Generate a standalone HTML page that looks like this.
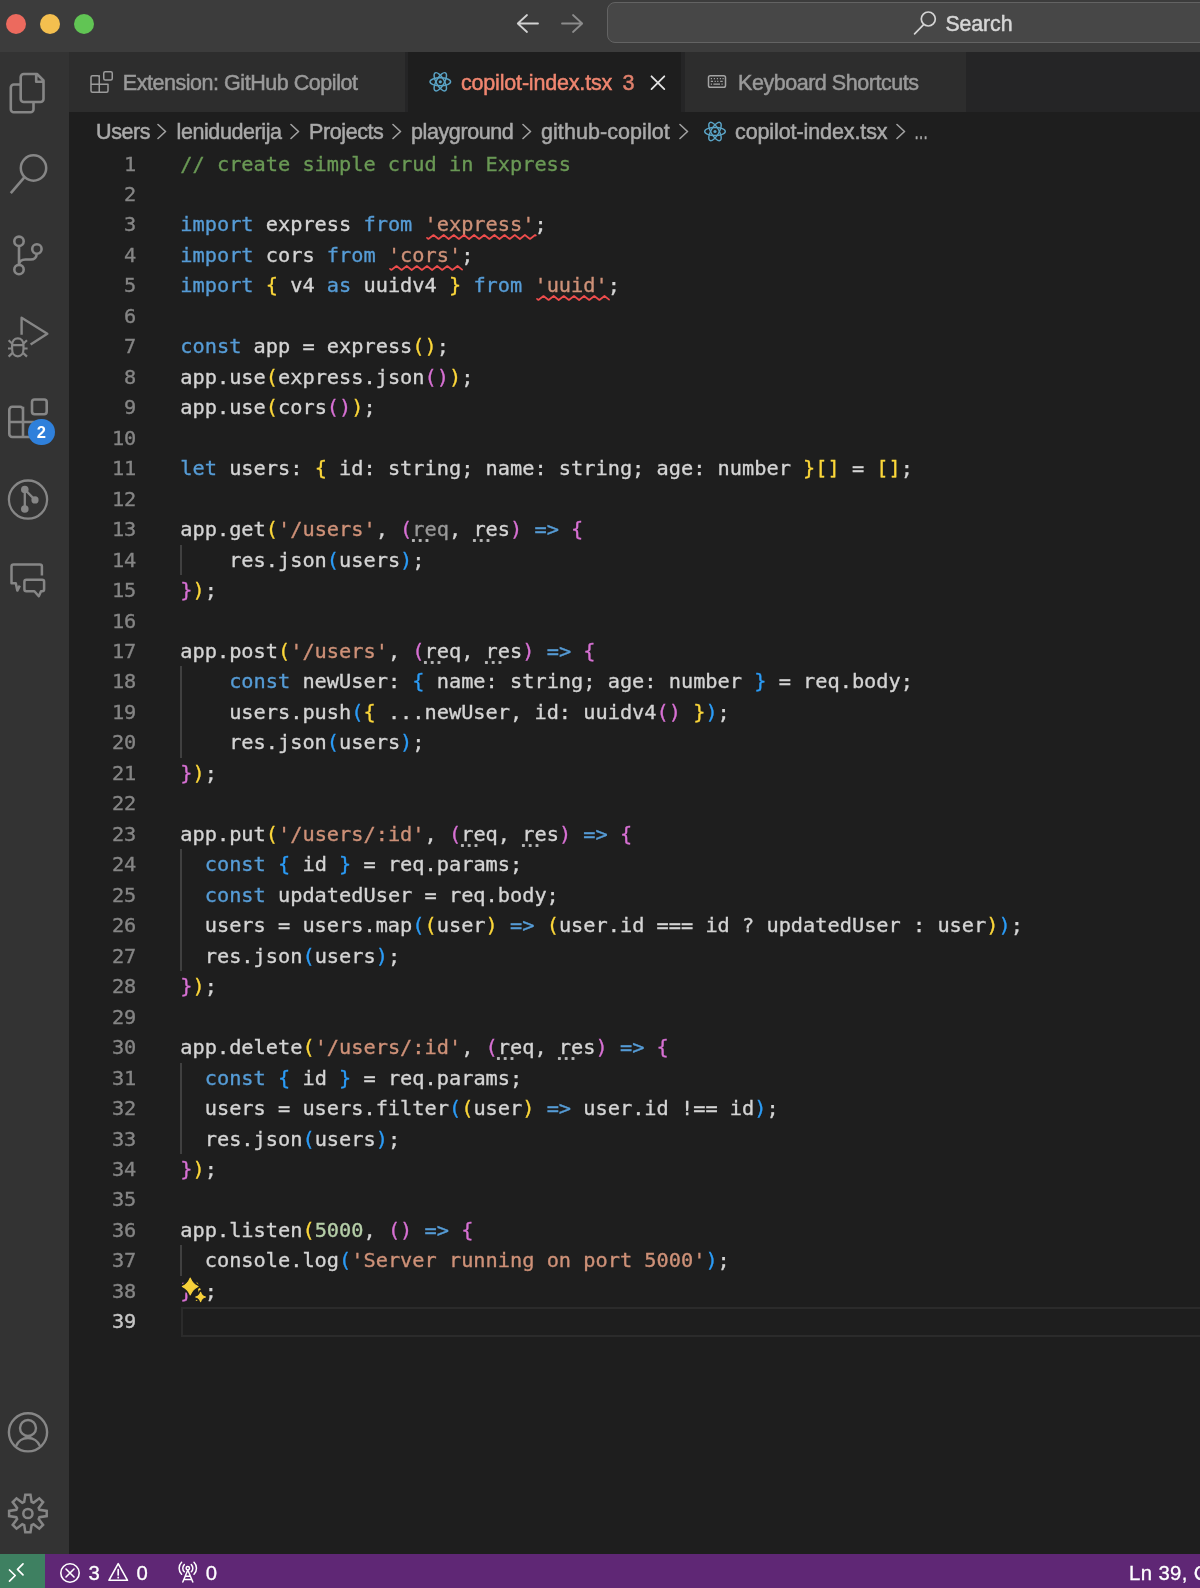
<!DOCTYPE html>
<html lang="en">
<head>
<meta charset="utf-8">
<title>copilot-index.tsx</title>
<style>
*{box-sizing:border-box;margin:0;padding:0}
html,body{width:1200px;height:1588px;overflow:hidden;background:#1e1e1e}
body{position:relative;will-change:transform;font-family:"Liberation Sans",sans-serif;color:#ccc;-webkit-font-smoothing:antialiased}
.abs{position:absolute}
#title{left:0;top:0;width:1200px;height:52.4px;background:#3c3c3c}
.tl{position:absolute;top:14px;width:20px;height:20px;border-radius:50%}
#search{left:607px;top:2.4px;width:620px;height:40.6px;border:1.7px solid #636363;border-radius:8px;background:#474747}
#stext{position:absolute;left:945.5px;top:10.8px;font-size:21.3px;line-height:26px;color:#d6d6d6;-webkit-text-stroke:0.5px #d6d6d6;letter-spacing:-0.1px}
#act{left:0;top:52px;width:69px;height:1502px;background:#333333}
#tabs{left:69px;top:52px;width:1131px;height:60px;background:#252526}
.tab{position:absolute;top:0;height:60px;background:#2d2d2d;font-size:21.5px;color:#9a9a9a;white-space:nowrap;letter-spacing:-0.46px;-webkit-text-stroke:0.5px}
.tab.on{background:#1e1e1e}
.tab .t{position:absolute;top:18.3px;line-height:26px}
#crumbs{left:69px;top:112px;width:1131px;height:37px;background:#1e1e1e;font-size:21.5px;color:#a9a9a9;white-space:nowrap;letter-spacing:-0.4px;-webkit-text-stroke:0.5px}
#crumbs span{position:absolute;top:7px;line-height:26px}
#code{position:absolute;left:68.3px;top:148.5px;-webkit-text-stroke:0.35px;width:1131px;font-family:"DejaVu Sans Mono","Liberation Mono",monospace;font-size:20.3px;color:#d4d4d4}
.row{position:relative;height:30.47px;line-height:30.47px;white-space:pre}
.ln{position:absolute;left:0;width:68px;text-align:right;color:#858585}
.ln.cur{color:#c6c6c6}
.tx{position:absolute;left:112px;top:0}
.g{position:absolute;left:112px;top:0;width:2px;height:30.47px;background:#404040}
.k{color:#569cd6}.s{color:#ce9178}.c{color:#6a9955}.n{color:#b5cea8}
.y{color:#fcd73a}.p{color:#d871d4}.b{color:#2b9cf7}
.sq{position:relative}
.sqg{left:2.2px;top:21.7px}
.f{color:#999}
.h{position:relative}
.h::after{content:"";position:absolute;left:-2.5px;top:22.1px;width:20.4px;height:3.4px;background:radial-gradient(circle at center,#b4b4b4 1.45px,rgba(180,180,180,0) 1.95px) 0 0/6.8px 3.4px repeat-x}
#status{left:0;top:1554px;width:1200px;height:34px;background:#5f2775;font-size:20.3px;color:#fff;white-space:nowrap;-webkit-text-stroke:0.3px}
#remote{left:0;top:0;width:45px;height:34px;background:#3e8061}
#status span{position:absolute;top:7px;line-height:24px;letter-spacing:0.4px}
svg{position:absolute;overflow:visible}
#badge{left:28px;top:418.6px;width:26.8px;height:26.8px;border-radius:50%;background:#2f80db;color:#fff;font-size:16.5px;font-weight:bold;text-align:center;line-height:26px}
#curline{left:181px;top:1307px;width:1030px;height:29.5px;border:2px solid #2b2b2b}
</style>
</head>
<body>
<div id="title" class="abs">
  <div class="tl" style="left:6px;background:#ec6a5e"></div>
  <div class="tl" style="left:40px;background:#f4bf4f"></div>
  <div class="tl" style="left:74px;background:#61c554"></div>
  <svg style="left:0;top:0" width="1200" height="52" fill="none" stroke-linecap="round" stroke-linejoin="round">
    <path d="M538 23.5H518M527 15l-9.2 8.5 9.2 8.5" stroke="#d2d2d2" stroke-width="1.8"/>
    <path d="M562 23.5h20M573 15l9.2 8.5-9.2 8.5" stroke="#8c8c8c" stroke-width="1.8"/>
  </svg>
  <div id="search" class="abs"></div>
  <svg style="left:0;top:0" width="1200" height="52" fill="none" stroke="#d4d4d4" stroke-width="1.7" stroke-linecap="round">
    <circle cx="928.3" cy="19" r="7"/><path d="M923.6 24.6L914.6 33.8"/>
  </svg>
  <span id="stext">Search</span>
</div>
<div id="act" class="abs"></div>
<svg id="acticons" style="left:0;top:0" width="69" height="1588" fill="none" stroke="#868686" stroke-width="2.6" stroke-linejoin="round">
  <!-- explorer -->
  <path d="M24 74H37L43.5 80.5V99a3 3 0 0 1-3 3H23.7a3 3 0 0 1-3-3V77a3 3 0 0 1 3-3zM36.2 74V81.8H43.5"/>
  <path d="M20.7 84.5H13.8a3 3 0 0 0-3 3V109.2a3 3 0 0 0 3 3H30.5a3 3 0 0 0 3-3V102"/>
  <!-- search -->
  <circle cx="33.5" cy="168" r="12.7" stroke-width="2.5"/><path d="M24.3 177.4L10.8 193.2" stroke-width="2.6"/>
  <!-- source control -->
  <circle cx="19" cy="241.3" r="4.7"/><circle cx="36.9" cy="249" r="4.7"/><circle cx="19" cy="269.6" r="4.7"/>
  <path d="M19 246V264.9M36.7 253.7c0 3.6-2.4 5.8-6 5.8h-5.2c-3.8 0-6.3 2.2-6.5 5.4"/>
  <!-- debug -->
  <path d="M21.6 334.7V317.8L47.3 333.8L30.6 344.6" stroke-width="2.4" stroke-linejoin="round"/>
  <g stroke-width="2.2">
  <path d="M12.1 345.3c0-4.2 2.4-7 5.7-7s5.7 2.8 5.7 7v3.8c0 4.4-2.4 7.3-5.7 7.3s-5.7-2.9-5.7-7.3zM12.1 345.2H23.5"/>
  <path d="M8.6 340.3L12.3 343.8M27 340.3L23.3 343.8M8 348.5H12M27.6 348.5H23.6M8.6 356.6L12.6 352.9M27 356.6L23 352.9"/>
  </g>
  <!-- extensions -->
  <rect x="32" y="399.5" width="14.7" height="14.7" rx="2.6"/>
  <path d="M23 422H9.3M23 406.8V437M23 422H37.5V434a3 3 0 0 1-3 3H12.3a3 3 0 0 1-3-3V409.8a3 3 0 0 1 3-3H20a3 3 0 0 1 3 3"/>
  <!-- git graph -->
  <circle cx="28" cy="499.6" r="19.1" stroke-width="2.3"/>
  <path d="M24.8 489.5V509M24.8 489.5L35 499.9" stroke-width="2.3"/>
  <g fill="#868686" stroke="none"><circle cx="24.8" cy="489.5" r="3.8"/><circle cx="35" cy="499.9" r="3.6"/><circle cx="24.8" cy="509" r="3.8"/></g>
  <!-- chat -->
  <path d="M41.9 575.6V566.4a2 2 0 0 0-2-2H13.5a2 2 0 0 0-2 2V583.3H15.8L17.3 590.6L19.8 585.6" stroke-width="2.5"/>
  <path d="M26.4 579.7H42.1a2 2 0 0 1 2 2V589.2a2 2 0 0 1-2 2H41L38.8 596.3L34.4 591.2H26.4a2 2 0 0 1-2-2V581.7a2 2 0 0 1 2-2z" stroke-width="2.5"/>
  <!-- account -->
  <circle cx="28" cy="1432.3" r="19.1" stroke-width="2.4"/>
  <circle cx="28" cy="1428" r="8" stroke-width="2.4"/>
  <path d="M15.9 1446.3a13 13 0 0 1 24.2 0" stroke-width="2.4"/>
  <!-- gear -->
  <path d="M24.2 1501.9 L25.3 1494.7 L30.5 1494.7 L31.6 1501.9 L33.5 1502.7 L39.3 1498.3 L43.1 1502.1 L38.7 1507.9 L39.5 1509.8 L46.7 1510.9 L46.7 1516.1 L39.5 1517.2 L38.7 1519.1 L43.1 1524.9 L39.3 1528.7 L33.5 1524.3 L31.6 1525.1 L30.5 1532.3 L25.3 1532.3 L24.2 1525.1 L22.3 1524.3 L16.5 1528.7 L12.7 1524.9 L17.1 1519.1 L16.3 1517.2 L9.1 1516.1 L9.1 1510.9 L16.3 1509.8 L17.1 1507.9 L12.7 1502.1 L16.5 1498.3 L22.3 1502.7Z" stroke-width="2.5" stroke-linejoin="miter"/>
  <circle cx="27.9" cy="1513.5" r="4.6" stroke-width="2.5"/>
</svg>
<div id="badge" class="abs">2</div>
<div id="tabs" class="abs">
  <div class="tab" style="left:0;width:336px"><span class="t" style="left:53.8px">Extension: GitHub Copilot</span></div>
  <div class="tab on" style="left:338.5px;width:273.5px"><span class="t" style="left:53.5px;color:#f08670;letter-spacing:-0.18px">copilot-index.tsx</span><span class="t" style="left:215px;color:#e0806c">3</span></div>
  <div class="tab" style="left:615.5px;width:281px"><span class="t" style="left:53.5px">Keyboard Shortcuts</span></div>
  <svg style="left:0;top:0" width="900" height="60" fill="none" stroke-linecap="round" stroke-linejoin="round">
    <!-- ext tab icon (page x - 69, y - 52) -->
    <g stroke="#9c9c9c" stroke-width="1.5">
      <rect x="34.75" y="19.75" width="8.5" height="8.3" rx="1.5"/>
      <path d="M30.25 32.25H22M30.25 23.75V40.25M30.25 32.25H39V38.75a1.5 1.5 0 0 1-1.5 1.5H23.5a1.5 1.5 0 0 1-1.5-1.5V25.25a1.5 1.5 0 0 1 1.5-1.5H28.75a1.5 1.5 0 0 1 1.5 1.5"/>
    </g>
    <!-- react icon -->
    <g stroke="#5aa3c5" stroke-width="1.45" transform="translate(371.3 29.8)">
      <ellipse rx="10.3" ry="4"/><ellipse rx="10.3" ry="4" transform="rotate(60)"/><ellipse rx="10.3" ry="4" transform="rotate(120)"/>
      <circle r="1.6" fill="#5aa3c5" stroke="none"/>
    </g>
    <!-- close -->
    <path d="M582.5 24.3L595.3 37.1M595.3 24.3L582.5 37.1" stroke="#e4e4e4" stroke-width="1.8"/>
    <!-- keyboard -->
    <g stroke="#a4a4a4" stroke-width="1.5">
      <rect x="639.5" y="23.7" width="17" height="11.6" rx="1.8"/>
      <path stroke-width="1.2" stroke-linecap="butt" d="M641.8 26.7h1.2M644.8 26.7h1.2M647.8 26.7h1.2M650.8 26.7h1.2M653.5 26.7h1.2M641.8 29.4h2.2M645.6 29.4h1.2M648.2 29.4h1.2M651.2 29.4h2.5M641.8 32.2h1.2M644.4 32.2h6.6M652.5 32.2h1.2"/>
    </g>
  </svg>
</div>
<div id="crumbs" class="abs">
  <span style="left:27px">Users</span>
  <span style="left:107.5px">leniduderija</span>
  <span style="left:240px">Projects</span>
  <span style="left:342px">playground</span>
  <span style="left:472px;letter-spacing:0.07px">github-copilot</span>
  <span style="left:666px;letter-spacing:-0.1px">copilot-index.tsx</span>
  <span style="left:845px;transform:scaleX(0.66);transform-origin:0 0">…</span>
  <svg style="left:0;top:0" width="900" height="37" fill="none" stroke="#a2a2a2" stroke-width="1.6" stroke-linecap="round" stroke-linejoin="round">
    <path d="M89 12.5l7.5 7-7.5 7M222 12.5l7.5 7-7.5 7M324 12.5l7.5 7-7.5 7M454 12.5l7.5 7-7.5 7M611 12.5l7.5 7-7.5 7M828 12.5l7.5 7-7.5 7"/>
    <g stroke="#5aa3c5" stroke-width="1.45" transform="translate(646 19.5)">
      <ellipse rx="10.3" ry="4"/><ellipse rx="10.3" ry="4" transform="rotate(60)"/><ellipse rx="10.3" ry="4" transform="rotate(120)"/>
      <circle r="1.6" fill="#5aa3c5" stroke="none"/>
    </g>
  </svg>
</div>
<div id="code">
<div class="row"><span class="ln">1</span><span class="tx"><span class="c">// create simple crud in Express</span></span></div>
<div class="row"><span class="ln">2</span><span class="tx"></span></div>
<div class="row"><span class="ln">3</span><span class="tx"><span class="k">import</span> express <span class="k">from</span> <span class="s sq"><svg class="sqg" width="108.8" height="6" fill="none" stroke="#ee4d4d" stroke-width="1.7" stroke-linejoin="round" stroke-linecap="round"><path d="M0.0 3.9 L1.4 5.0 L6.5 1.0 L11.6 5.0 L16.7 1.0 L21.7 5.0 L26.8 1.0 L31.9 5.0 L37.0 1.0 L42.1 5.0 L47.1 1.0 L52.2 5.0 L57.3 1.0 L62.4 5.0 L67.5 1.0 L72.5 5.0 L77.6 1.0 L82.7 5.0 L87.8 1.0 L92.9 5.0 L97.9 1.0 L103.0 5.0 L108.1 1.0 L108.8 1.5"/></svg>'express'</span>;</span></div>
<div class="row"><span class="ln">4</span><span class="tx"><span class="k">import</span> cors <span class="k">from</span> <span class="s sq"><svg class="sqg" width="72.1" height="6" fill="none" stroke="#ee4d4d" stroke-width="1.7" stroke-linejoin="round" stroke-linecap="round"><path d="M0.0 3.9 L1.4 5.0 L6.5 1.0 L11.6 5.0 L16.7 1.0 L21.7 5.0 L26.8 1.0 L31.9 5.0 L37.0 1.0 L42.1 5.0 L47.1 1.0 L52.2 5.0 L57.3 1.0 L62.4 5.0 L67.5 1.0 L72.1 4.7"/></svg>'cors'</span>;</span></div>
<div class="row"><span class="ln">5</span><span class="tx"><span class="k">import</span> <span class="y">{</span> v4 <span class="k">as</span> uuidv4 <span class="y">}</span> <span class="k">from</span> <span class="s sq"><svg class="sqg" width="72.1" height="6" fill="none" stroke="#ee4d4d" stroke-width="1.7" stroke-linejoin="round" stroke-linecap="round"><path d="M0.0 3.9 L1.4 5.0 L6.5 1.0 L11.6 5.0 L16.7 1.0 L21.7 5.0 L26.8 1.0 L31.9 5.0 L37.0 1.0 L42.1 5.0 L47.1 1.0 L52.2 5.0 L57.3 1.0 L62.4 5.0 L67.5 1.0 L72.1 4.7"/></svg>'uuid'</span>;</span></div>
<div class="row"><span class="ln">6</span><span class="tx"></span></div>
<div class="row"><span class="ln">7</span><span class="tx"><span class="k">const</span> app = express<span class="y">()</span>;</span></div>
<div class="row"><span class="ln">8</span><span class="tx">app.use<span class="y">(</span>express.json<span class="p">()</span><span class="y">)</span>;</span></div>
<div class="row"><span class="ln">9</span><span class="tx">app.use<span class="y">(</span>cors<span class="p">()</span><span class="y">)</span>;</span></div>
<div class="row"><span class="ln">10</span><span class="tx"></span></div>
<div class="row"><span class="ln">11</span><span class="tx"><span class="k">let</span> users: <span class="y">{</span> id: string; name: string; age: number <span class="y">}[]</span> = <span class="y">[]</span>;</span></div>
<div class="row"><span class="ln">12</span><span class="tx"></span></div>
<div class="row"><span class="ln">13</span><span class="tx">app.get<span class="y">(</span><span class="s">'/users'</span>, <span class="p">(</span><span class="h f">r</span><span class="f">eq</span>, <span class="h">r</span>es<span class="p">)</span> <span class="k">=&gt;</span> <span class="p">{</span></span></div>
<div class="row"><span class="ln">14</span><i class="g"></i><span class="tx">    res.json<span class="b">(</span>users<span class="b">)</span>;</span></div>
<div class="row"><span class="ln">15</span><span class="tx"><span class="p">}</span><span class="y">)</span>;</span></div>
<div class="row"><span class="ln">16</span><span class="tx"></span></div>
<div class="row"><span class="ln">17</span><span class="tx">app.post<span class="y">(</span><span class="s">'/users'</span>, <span class="p">(</span><span class="h">r</span>eq, <span class="h">r</span>es<span class="p">)</span> <span class="k">=&gt;</span> <span class="p">{</span></span></div>
<div class="row"><span class="ln">18</span><i class="g"></i><span class="tx">    <span class="k">const</span> newUser: <span class="b">{</span> name: string; age: number <span class="b">}</span> = req.body;</span></div>
<div class="row"><span class="ln">19</span><i class="g"></i><span class="tx">    users.push<span class="b">(</span><span class="y">{</span> ...newUser, id: uuidv4<span class="p">()</span> <span class="y">}</span><span class="b">)</span>;</span></div>
<div class="row"><span class="ln">20</span><i class="g"></i><span class="tx">    res.json<span class="b">(</span>users<span class="b">)</span>;</span></div>
<div class="row"><span class="ln">21</span><span class="tx"><span class="p">}</span><span class="y">)</span>;</span></div>
<div class="row"><span class="ln">22</span><span class="tx"></span></div>
<div class="row"><span class="ln">23</span><span class="tx">app.put<span class="y">(</span><span class="s">'/users/:id'</span>, <span class="p">(</span><span class="h">r</span>eq, <span class="h">r</span>es<span class="p">)</span> <span class="k">=&gt;</span> <span class="p">{</span></span></div>
<div class="row"><span class="ln">24</span><i class="g"></i><span class="tx">  <span class="k">const</span> <span class="b">{</span> id <span class="b">}</span> = req.params;</span></div>
<div class="row"><span class="ln">25</span><i class="g"></i><span class="tx">  <span class="k">const</span> updatedUser = req.body;</span></div>
<div class="row"><span class="ln">26</span><i class="g"></i><span class="tx">  users = users.map<span class="b">(</span><span class="y">(</span>user<span class="y">)</span> <span class="k">=&gt;</span> <span class="y">(</span>user.id === id ? updatedUser : user<span class="y">)</span><span class="b">)</span>;</span></div>
<div class="row"><span class="ln">27</span><i class="g"></i><span class="tx">  res.json<span class="b">(</span>users<span class="b">)</span>;</span></div>
<div class="row"><span class="ln">28</span><span class="tx"><span class="p">}</span><span class="y">)</span>;</span></div>
<div class="row"><span class="ln">29</span><span class="tx"></span></div>
<div class="row"><span class="ln">30</span><span class="tx">app.delete<span class="y">(</span><span class="s">'/users/:id'</span>, <span class="p">(</span><span class="h">r</span>eq, <span class="h">r</span>es<span class="p">)</span> <span class="k">=&gt;</span> <span class="p">{</span></span></div>
<div class="row"><span class="ln">31</span><i class="g"></i><span class="tx">  <span class="k">const</span> <span class="b">{</span> id <span class="b">}</span> = req.params;</span></div>
<div class="row"><span class="ln">32</span><i class="g"></i><span class="tx">  users = users.filter<span class="b">(</span><span class="y">(</span>user<span class="y">)</span> <span class="k">=&gt;</span> user.id !== id<span class="b">)</span>;</span></div>
<div class="row"><span class="ln">33</span><i class="g"></i><span class="tx">  res.json<span class="b">(</span>users<span class="b">)</span>;</span></div>
<div class="row"><span class="ln">34</span><span class="tx"><span class="p">}</span><span class="y">)</span>;</span></div>
<div class="row"><span class="ln">35</span><span class="tx"></span></div>
<div class="row"><span class="ln">36</span><span class="tx">app.listen<span class="y">(</span><span class="n">5000</span>, <span class="p">()</span> <span class="k">=&gt;</span> <span class="p">{</span></span></div>
<div class="row"><span class="ln">37</span><i class="g"></i><span class="tx">  console.log<span class="b">(</span><span class="s">'Server running on port 5000'</span><span class="b">)</span>;</span></div>
<div class="row"><span class="ln">38</span><span class="tx"><span class="p">}</span><span class="y">)</span>;</span></div>
<div class="row"><span class="ln cur">39</span><span class="tx"></span></div>
</div>
<div id="curline" class="abs"></div>
<svg id="sparkle" style="left:0;top:0" width="1200" height="1588" stroke-linejoin="round"><g fill="#1e1e1e" stroke="#1e1e1e" stroke-width="4.5"><path d="M190.2 1278.1 Q192.5 1284.0 198.0 1286.5 Q192.5 1289.0 190.2 1294.9 Q187.9 1289.0 182.4 1286.5 Q187.9 1284.0 190.2 1278.1Z"/><path d="M200.6 1292.3 Q201.6 1296.1 205.5 1297.0 Q201.6 1297.9 200.6 1301.7 Q199.6 1297.9 195.7 1297.0 Q199.6 1296.1 200.6 1292.3Z"/></g><g fill="#f7d03a" stroke="#f7d03a" stroke-width="1.2"><path d="M190.2 1278.1 Q192.5 1284.0 198.0 1286.5 Q192.5 1289.0 190.2 1294.9 Q187.9 1289.0 182.4 1286.5 Q187.9 1284.0 190.2 1278.1Z"/><path d="M200.6 1292.3 Q201.6 1296.1 205.5 1297.0 Q201.6 1297.9 200.6 1301.7 Q199.6 1297.9 195.7 1297.0 Q199.6 1296.1 200.6 1292.3Z"/></g></svg>
<div id="status" class="abs">
  <div id="remote" class="abs"></div>
  <svg style="left:0;top:0" width="240" height="34" fill="none" stroke="#fff" stroke-width="1.7" stroke-linecap="round" stroke-linejoin="round">
    <path d="M9.5 16l5.7 5.5-5.7 5.7M23 9.8l-5.5 5.5 5.5 5.6"/>
    <circle cx="70" cy="19" r="9.2" stroke-width="1.6"/><path d="M66 15l8 8M74 15l-8 8" stroke-width="1.6"/>
    <path d="M118.2 9.6L127.5 26.3H108.9z" stroke-width="1.6"/><path d="M118.2 15.5v5.5M118.2 23.3v.4" stroke-width="1.7"/>
    <g stroke-width="1.5">
      <circle cx="187.8" cy="14.2" r="1.7"/>
      <path d="M187.8 16l-5 12M187.8 16l5 12M185.2 22.2h5.2M183.8 25.6h8"/>
      <path d="M184.3 10.6a5 5 0 0 0 0 7.2M191.3 10.6a5 5 0 0 1 0 7.2M181.6 8.2a8.5 8.5 0 0 0 0 12M194 8.2a8.5 8.5 0 0 1 0 12"/>
    </g>
  </svg>
  <span style="left:88.5px">3</span>
  <span style="left:136.5px">0</span>
  <span style="left:205.8px">0</span>
  <span style="left:1129px">Ln 39, Col 1</span>
</div>
</body>
</html>
